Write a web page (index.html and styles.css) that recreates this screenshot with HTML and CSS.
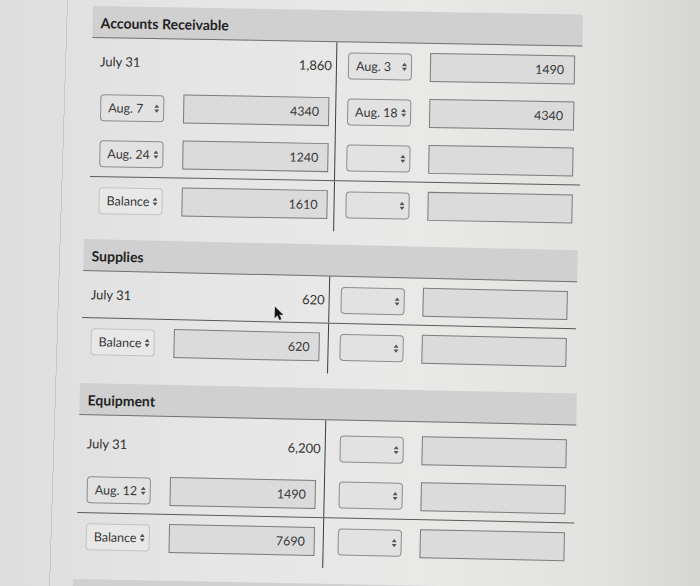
FILE: index.html
```html
<!DOCTYPE html>
<html lang="en">
<head>
<meta charset="utf-8">
<title>T-accounts</title>
<link rel="stylesheet" href="styles.css">
</head>
<body>
<main class="ledger">

  <section class="acct acct--ar">
    <h2 class="acct__head">Accounts Receivable</h2>
    <div class="acct__row">
      <div class="cell cell--left cell--open">
        <span class="label">July 31</span><span class="amount">1,860</span>
      </div>
      <div class="cell cell--right">
        <div class="select"><span>Aug. 3</span><svg class="arrows" viewBox="0 0 6 10" width="6" height="10"><path d="M3 0L6 4H0z M3 10L0 6H6z"/></svg></div>
        <div class="field field--right">1490</div>
      </div>
    </div>
    <div class="acct__row">
      <div class="cell cell--left">
        <div class="select"><span>Aug. 7</span><svg class="arrows" viewBox="0 0 6 10" width="6" height="10"><path d="M3 0L6 4H0z M3 10L0 6H6z"/></svg></div>
        <div class="field">4340</div>
      </div>
      <div class="cell cell--right">
        <div class="select"><span>Aug. 18</span><svg class="arrows" viewBox="0 0 6 10" width="6" height="10"><path d="M3 0L6 4H0z M3 10L0 6H6z"/></svg></div>
        <div class="field field--right">4340</div>
      </div>
    </div>
    <div class="acct__row">
      <div class="cell cell--left">
        <div class="select"><span>Aug. 24</span><svg class="arrows" viewBox="0 0 6 10" width="6" height="10"><path d="M3 0L6 4H0z M3 10L0 6H6z"/></svg></div>
        <div class="field">1240</div>
      </div>
      <div class="cell cell--right">
        <div class="select"><span></span><svg class="arrows" viewBox="0 0 6 10" width="6" height="10"><path d="M3 0L6 4H0z M3 10L0 6H6z"/></svg></div>
        <div class="field field--right"></div>
      </div>
    </div>
    <div class="acct__row acct__row--total">
      <div class="cell cell--left">
        <div class="select select--soft"><span>Balance</span><svg class="arrows" viewBox="0 0 6 10" width="6" height="10"><path d="M3 0L6 4H0z M3 10L0 6H6z"/></svg></div>
        <div class="field">1610</div>
      </div>
      <div class="cell cell--right">
        <div class="select"><span></span><svg class="arrows" viewBox="0 0 6 10" width="6" height="10"><path d="M3 0L6 4H0z M3 10L0 6H6z"/></svg></div>
        <div class="field field--right"></div>
      </div>
    </div>
  </section>

  <section class="acct acct--supplies">
    <h2 class="acct__head">Supplies</h2>
    <div class="acct__row">
      <div class="cell cell--left cell--open">
        <span class="label">July 31</span><span class="amount">620</span>
        <svg class="cursor" viewBox="0 0 9 14" width="9" height="14"><path d="M0.5 0.5V11.5L3.2 8.9L5.2 13.3L6.9 12.5L5 8.2H8.7Z" fill="#111" stroke="#444" stroke-width="0.6"/></svg>
      </div>
      <div class="cell cell--right">
        <div class="select"><span></span><svg class="arrows" viewBox="0 0 6 10" width="6" height="10"><path d="M3 0L6 4H0z M3 10L0 6H6z"/></svg></div>
        <div class="field field--right"></div>
      </div>
    </div>
    <div class="acct__row acct__row--total">
      <div class="cell cell--left">
        <div class="select select--soft"><span>Balance</span><svg class="arrows" viewBox="0 0 6 10" width="6" height="10"><path d="M3 0L6 4H0z M3 10L0 6H6z"/></svg></div>
        <div class="field">620</div>
      </div>
      <div class="cell cell--right">
        <div class="select"><span></span><svg class="arrows" viewBox="0 0 6 10" width="6" height="10"><path d="M3 0L6 4H0z M3 10L0 6H6z"/></svg></div>
        <div class="field field--right"></div>
      </div>
    </div>
  </section>

  <section class="acct acct--equipment">
    <h2 class="acct__head">Equipment</h2>
    <div class="acct__row acct__row--first">
      <div class="cell cell--left cell--open">
        <span class="label">July 31</span><span class="amount">6,200</span>
      </div>
      <div class="cell cell--right">
        <div class="select"><span></span><svg class="arrows" viewBox="0 0 6 10" width="6" height="10"><path d="M3 0L6 4H0z M3 10L0 6H6z"/></svg></div>
        <div class="field field--right"></div>
      </div>
    </div>
    <div class="acct__row">
      <div class="cell cell--left">
        <div class="select"><span>Aug. 12</span><svg class="arrows" viewBox="0 0 6 10" width="6" height="10"><path d="M3 0L6 4H0z M3 10L0 6H6z"/></svg></div>
        <div class="field">1490</div>
      </div>
      <div class="cell cell--right">
        <div class="select"><span></span><svg class="arrows" viewBox="0 0 6 10" width="6" height="10"><path d="M3 0L6 4H0z M3 10L0 6H6z"/></svg></div>
        <div class="field field--right"></div>
      </div>
    </div>
    <div class="acct__row acct__row--total">
      <div class="cell cell--left">
        <div class="select select--soft"><span>Balance</span><svg class="arrows" viewBox="0 0 6 10" width="6" height="10"><path d="M3 0L6 4H0z M3 10L0 6H6z"/></svg></div>
        <div class="field">7690</div>
      </div>
      <div class="cell cell--right">
        <div class="select"><span></span><svg class="arrows" viewBox="0 0 6 10" width="6" height="10"><path d="M3 0L6 4H0z M3 10L0 6H6z"/></svg></div>
        <div class="field field--right"></div>
      </div>
    </div>
  </section>

  <section class="acct acct--next">
    <h2 class="acct__head"></h2>
  </section>

</main>
</body>
</html>
```

FILE: styles.css
```css
html, body {
  margin: 0;
  padding: 0;
  height: 100%;
  overflow: hidden;
}

html {
  background:
    linear-gradient(91.76deg, transparent 67px, #c8c8c8 67px, #c8c8c8 68px, transparent 68px),
    linear-gradient(to right, #dedede 0%, #e6e6e6 30%, #e9e9e8 60%, #e2e2e1 85%, #d6d6d5 100%);
}

body {
  font-family: Lato, "Open Sans", "Liberation Sans", sans-serif;
  color: #333;
}

.ledger {
  display: flex;
  flex-direction: column;
  padding-top: 6px;
}

.acct {
  --col: 245px;
  --right-pad: 11px;
  width: 490px;
  transform-origin: 0 0;
  transform: rotate(1deg);
}

.acct--ar {
  margin-left: 93px;
}

.acct--supplies {
  --col: 247px;
  width: 494px;
  margin-left: 84px;
  margin-top: 12px;
  transform: rotate(1.3deg);
}

.acct--equipment {
  --col: 247px;
  --right-pad: 14px;
  width: 497px;
  margin-left: 80px;
  margin-top: 15px;
  transform: rotate(1.2deg);
}

.acct--next {
  width: 500px;
  margin-left: 73px;
  margin-top: 16px;
  transform: rotate(1.1deg);
}

.acct__head {
  margin: 0;
  height: 32px;
  box-sizing: border-box;
  display: flex;
  align-items: center;
  padding: 2px 0 0 8px;
  background: #d0d0d0;
  border-bottom: 1px solid #727272;
  font-size: 14px;
  font-weight: 700;
  color: #232323;
}

.acct__row {
  display: grid;
  grid-template-columns: var(--col) 1fr;
  height: 46px;
}

.acct__row--first {
  height: 51px;
  padding-top: 5px;
  box-sizing: border-box;
}

.acct__row--total {
  height: 50px;
  border-top: 1px solid #5a5a5a;
}

.cell {
  display: flex;
  align-items: center;
  box-sizing: border-box;
}

.acct__row--total .cell {
  padding-bottom: 4px;
}

.cell--left {
  border-right: 1px solid #3e3e3e;
  padding: 0 6px 0 9px;
  gap: 19px;
}

.acct__row--total .cell--left {
  padding-bottom: 4px;
}

.acct__row--first .cell--left {
  margin-top: -5px;
  padding-top: 5px;
}

.cell--open {
  position: relative;
  justify-content: space-between;
  padding: 0 4px 0 8px;
}

.cell--right {
  padding-left: var(--right-pad);
  gap: 18px;
}

.label,
.amount {
  font-size: 13px;
  color: #333;
}

.select {
  width: 64px;
  height: 27px;
  box-sizing: border-box;
  flex: none;
  display: flex;
  align-items: center;
  justify-content: space-between;
  padding: 0 4px 0 7px;
  background: #e2e2e2;
  border: 1px solid #8c8c8c;
  border-radius: 4px;
  font-size: 12.5px;
  color: #383838;
  white-space: nowrap;
}

.select--soft {
  background: #e8e8e8;
  border-color: #c2c2c2;
}

.arrows {
  flex: none;
  fill: #555;
  width: 5px;
  height: 9px;
}

.field {
  width: 146px;
  height: 29px;
  box-sizing: border-box;
  flex: none;
  background: #dbdbdb;
  border: 1px solid #7c7c7c;
  padding-right: 9px;
  text-align: right;
  font-size: 12.5px;
  line-height: 27px;
  color: #383838;
}

.field--right {
  width: 145px;
  padding-right: 10px;
}

.cursor {
  position: absolute;
  left: 192px;
  top: 31px;
}
```
